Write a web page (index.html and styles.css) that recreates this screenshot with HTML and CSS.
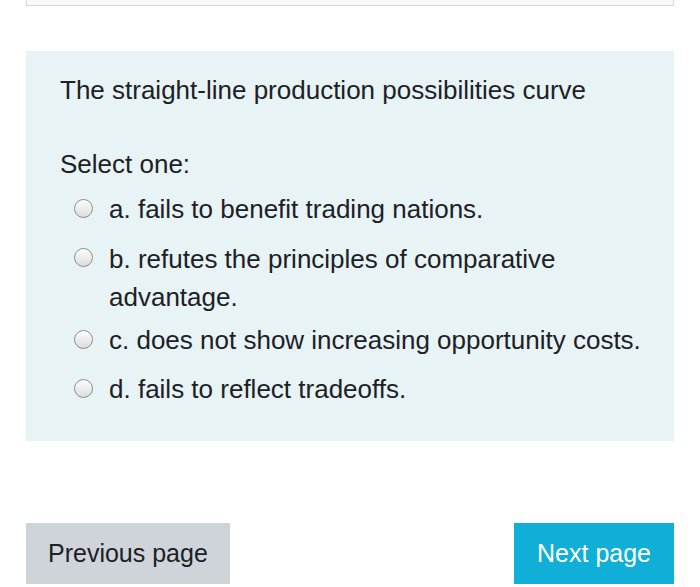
FILE: index.html
```html
<!DOCTYPE html>
<html lang="en">
<head>
<meta charset="utf-8">
<title>Question</title>
<link rel="stylesheet" href="styles.css">
</head>
<body>
<div class="page">
  <div class="prev-box"></div>
  <div class="info">
    <p class="qtext">The straight-line production possibilities curve</p>
    <p class="prompt">Select one:</p>
    <div class="answers">
      <label class="opt"><span class="radio"></span><span class="otext">a. fails to benefit trading nations.</span></label>
      <label class="opt opt-wrap"><span class="radio"></span><span class="otext">b. refutes the principles of comparative advantage.</span></label>
      <label class="opt"><span class="radio"></span><span class="otext">c. does not show increasing opportunity costs.</span></label>
      <label class="opt"><span class="radio"></span><span class="otext">d. fails to reflect tradeoffs.</span></label>
    </div>
  </div>
  <div class="nav">
    <button class="btn btn-prev">Previous page</button>
    <button class="btn btn-next">Next page</button>
  </div>
</div>
</body>
</html>
```
FILE: styles.css
```css
html, body {
  margin: 0;
  padding: 0;
  background: #ffffff;
}
body {
  font-family: "Liberation Sans", Arial, sans-serif;
  color: #1d2125;
}
.page {
  width: 648px;
  margin: 0 26px;
}
.prev-box {
  height: 5px;
  border: 1px solid #d6d6d6;
  border-top: none;
  background: #f8f9fa;
}
.info {
  margin-top: 45px;
  background: #e7f3f5;
  height: 390px;
  box-sizing: border-box;
  padding: 23px 28px 0 34px;
}
.qtext {
  margin: 0;
  font-size: 26px;
  line-height: 32px;
}
.prompt {
  margin: 42px 0 0 0;
  font-size: 26px;
  line-height: 32px;
}
.answers {
  display: flex;
  flex-direction: column;
  gap: 12px;
  margin-top: 11px;
}
.opt {
  display: flex;
  align-items: flex-start;
  font-size: 26px;
  line-height: 37px;
}
.opt-wrap {
  line-height: 38px;
  margin-bottom: -6px;
}
.radio {
  flex: none;
  box-sizing: border-box;
  width: 19px;
  height: 19px;
  border-radius: 50%;
  border: 1px solid #8c8c8c;
  background: linear-gradient(#fdfdfd, #dcdcdc);
  box-shadow: inset 0 1px 1px rgba(255,255,255,0.8);
  margin: 8px 16px 0 14px;
}
.otext {
  flex: 1;
  min-width: 0;
}
.nav {
  display: flex;
  justify-content: space-between;
  margin-top: 82px;
}
.btn {
  border: none;
  border-radius: 0;
  height: 61px;
  font-family: inherit;
  font-size: 25px;
  padding: 0 22px;
}
.btn-prev {
  background: #ced4da;
  color: #1d2125;
}
.btn-next {
  background: #0fafd8;
  color: #ffffff;
  padding: 0 23px;
}
```
